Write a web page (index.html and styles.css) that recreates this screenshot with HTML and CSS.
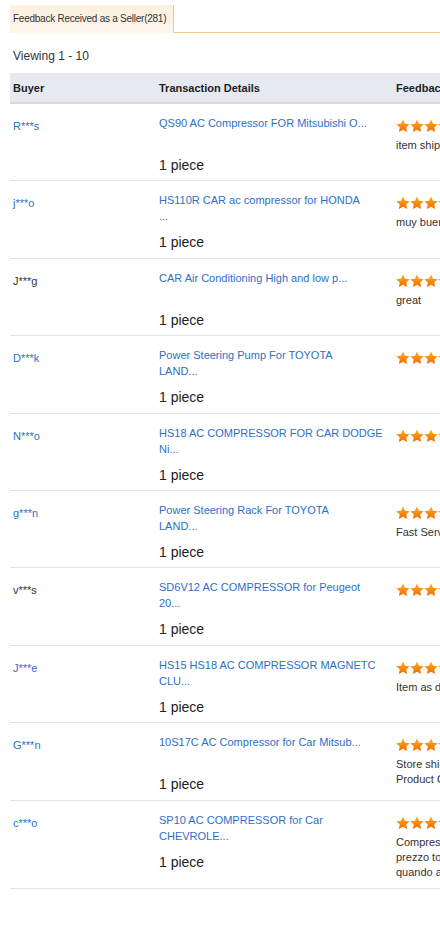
FILE: index.html
```html
<!DOCTYPE html>
<html>
<head>
<meta charset="utf-8">
<link rel="stylesheet" href="styles.css">
</head>
<body>
<svg width="0" height="0" class="defs">
  <defs>
    <linearGradient id="sg" x1="0" y1="0" x2="0" y2="1">
      <stop offset="0" stop-color="#ffb020"/>
      <stop offset="1" stop-color="#f06a00"/>
    </linearGradient>
    <symbol id="star" viewBox="0 0 14 14">
      <path d="M7 0.4l2 4.3 4.7.5-3.5 3.2 1 4.6L7 10.7l-4.2 2.3 1-4.6L.3 5.2l4.7-.5z" fill="url(#sg)"/>
    </symbol>
  </defs>
</svg>
<div class="page">
  <div class="tabs">
    <div class="tab">Feedback Received as a Seller(281)</div>
    <div class="tabline"></div>
  </div>
  <div class="viewing">Viewing 1 - 10</div>
  <table class="fb">
    <thead>
      <tr><th class="c1">Buyer</th><th class="c2">Transaction Details</th><th class="c3">Feedback</th></tr>
    </thead>
    <tbody>
      <tr>
        <td><a class="buyer">R***s</a></td>
        <td><div class="title">QS90 AC Compressor FOR Mitsubishi O...</div><div class="qty">1 piece</div></td>
        <td><div class="stars"><svg><use href="#star"/></svg><svg><use href="#star"/></svg><svg><use href="#star"/></svg><svg><use href="#star"/></svg><svg><use href="#star"/></svg></div><div class="fbtext">item shipped quickly and well packed</div></td>
      </tr>
      <tr>
        <td><a class="buyer">j***o</a></td>
        <td><div class="title">HS110R CAR ac compressor for HONDA<br>...</div><div class="qty">1 piece</div></td>
        <td><div class="stars"><svg><use href="#star"/></svg><svg><use href="#star"/></svg><svg><use href="#star"/></svg><svg><use href="#star"/></svg><svg><use href="#star"/></svg></div><div class="fbtext">muy bueno</div></td>
      </tr>
      <tr>
        <td><span class="buyer plain">J***g</span></td>
        <td><div class="title">CAR Air Conditioning High and low p...</div><div class="qty">1 piece</div></td>
        <td><div class="stars"><svg><use href="#star"/></svg><svg><use href="#star"/></svg><svg><use href="#star"/></svg><svg><use href="#star"/></svg><svg><use href="#star"/></svg></div><div class="fbtext">great</div></td>
      </tr>
      <tr>
        <td><a class="buyer">D***k</a></td>
        <td><div class="title">Power Steering Pump For TOYOTA<br>LAND...</div><div class="qty">1 piece</div></td>
        <td><div class="stars"><svg><use href="#star"/></svg><svg><use href="#star"/></svg><svg><use href="#star"/></svg><svg><use href="#star"/></svg><svg><use href="#star"/></svg></div></td>
      </tr>
      <tr>
        <td><a class="buyer">N***o</a></td>
        <td><div class="title">HS18 AC COMPRESSOR FOR CAR DODGE<br>Ni...</div><div class="qty">1 piece</div></td>
        <td><div class="stars"><svg><use href="#star"/></svg><svg><use href="#star"/></svg><svg><use href="#star"/></svg><svg><use href="#star"/></svg><svg><use href="#star"/></svg></div></td>
      </tr>
      <tr>
        <td><a class="buyer">g***n</a></td>
        <td><div class="title">Power Steering Rack For TOYOTA<br>LAND...</div><div class="qty">1 piece</div></td>
        <td><div class="stars"><svg><use href="#star"/></svg><svg><use href="#star"/></svg><svg><use href="#star"/></svg><svg><use href="#star"/></svg><svg><use href="#star"/></svg></div><div class="fbtext">Fast Service</div></td>
      </tr>
      <tr>
        <td><span class="buyer plain">v***s</span></td>
        <td><div class="title">SD6V12 AC COMPRESSOR for Peugeot<br>20...</div><div class="qty">1 piece</div></td>
        <td><div class="stars"><svg><use href="#star"/></svg><svg><use href="#star"/></svg><svg><use href="#star"/></svg><svg><use href="#star"/></svg><svg><use href="#star"/></svg></div></td>
      </tr>
      <tr>
        <td><a class="buyer">J***e</a></td>
        <td><div class="title">HS15 HS18 AC COMPRESSOR MAGNETC<br>CLU...</div><div class="qty">1 piece</div></td>
        <td><div class="stars"><svg><use href="#star"/></svg><svg><use href="#star"/></svg><svg><use href="#star"/></svg><svg><use href="#star"/></svg><svg><use href="#star"/></svg></div><div class="fbtext">Item as described</div></td>
      </tr>
      <tr>
        <td><a class="buyer">G***n</a></td>
        <td><div class="title">10S17C AC Compressor for Car Mitsub...</div><div class="qty">1 piece</div></td>
        <td><div class="stars"><svg><use href="#star"/></svg><svg><use href="#star"/></svg><svg><use href="#star"/></svg><svg><use href="#star"/></svg><svg><use href="#star"/></svg></div><div class="fbtext">Store shipped fast<br>Product OK</div></td>
      </tr>
      <tr class="last">
        <td><a class="buyer">c***o</a></td>
        <td><div class="title">SP10 AC COMPRESSOR for Car<br>CHEVROLE...</div><div class="qty">1 piece</div></td>
        <td><div class="stars"><svg><use href="#star"/></svg><svg><use href="#star"/></svg><svg><use href="#star"/></svg><svg><use href="#star"/></svg><svg><use href="#star"/></svg></div><div class="fbtext">Compressore ok,<br>prezzo top,<br>quando arriva</div></td>
      </tr>
    </tbody>
  </table>
</div>
</body>
</html>
```
FILE: styles.css
```css
html, body {
  margin: 0;
  padding: 0;
  background: #ffffff;
}
body {
  font-family: "Liberation Sans", Arial, sans-serif;
  color: #333333;
  width: 440px;
  overflow: hidden;
}
.defs {
  position: absolute;
  width: 0;
  height: 0;
}
.page {
  width: 440px;
  overflow: hidden;
}
.tabs {
  display: flex;
  padding-top: 5px;
  padding-left: 10px;
}
.tab {
  width: 164px;
  height: 28px;
  box-sizing: border-box;
  padding-left: 3px;
  padding-top: 8px;
  font-size: 10px;
  letter-spacing: -0.25px;
  color: #333;
  background: linear-gradient(#fcf0df, #fdf6ec);
  border-right: 1px solid #f4c98f;
  border-bottom: 1px solid #fdf6ec;
  white-space: nowrap;
}
.tabline {
  flex: 1;
  border-bottom: 1px solid #f4c98f;
}
.viewing {
  margin-top: 15px;
  margin-left: 13px;
  font-size: 12px;
  line-height: 16px;
  color: #333;
}
.fb {
  margin-top: 9px;
  margin-left: 10px;
  border-collapse: collapse;
  table-layout: fixed;
  width: 600px;
}
.fb th {
  background: #e6e9f1;
  border-bottom: 2px solid #d6d9e1;
  height: 29px;
  padding: 0 3px;
  text-align: left;
  font-size: 11px;
  font-weight: bold;
  color: #222;
}
.c1 { width: 140px; }
.c2 { width: 231px; }
.fb td {
  vertical-align: top;
  padding: 11px 3px 6.4px;
  border-bottom: 1px solid #e2e2e2;
}
.fb .last td {
  padding-bottom: 8px;
}
.buyer {
  display: block;
  font-size: 11px;
  line-height: 16px;
  margin-top: 3px;
  color: #2e6fc6;
  text-decoration: none;
}
.buyer.plain {
  color: #333;
}
.title {
  height: 32px;
  font-size: 11px;
  line-height: 16px;
  color: #2e6fc6;
  white-space: nowrap;
}
.qty {
  margin-top: 9px;
  font-size: 14px;
  line-height: 18px;
  color: #222;
}
.stars {
  display: flex;
  margin-top: 4px;
  height: 14px;
}
.stars svg {
  width: 14px;
  height: 14px;
  flex: none;
}
.fbtext {
  margin-top: 5px;
  font-size: 11px;
  line-height: 15px;
  color: #333;
  white-space: nowrap;
}
```
